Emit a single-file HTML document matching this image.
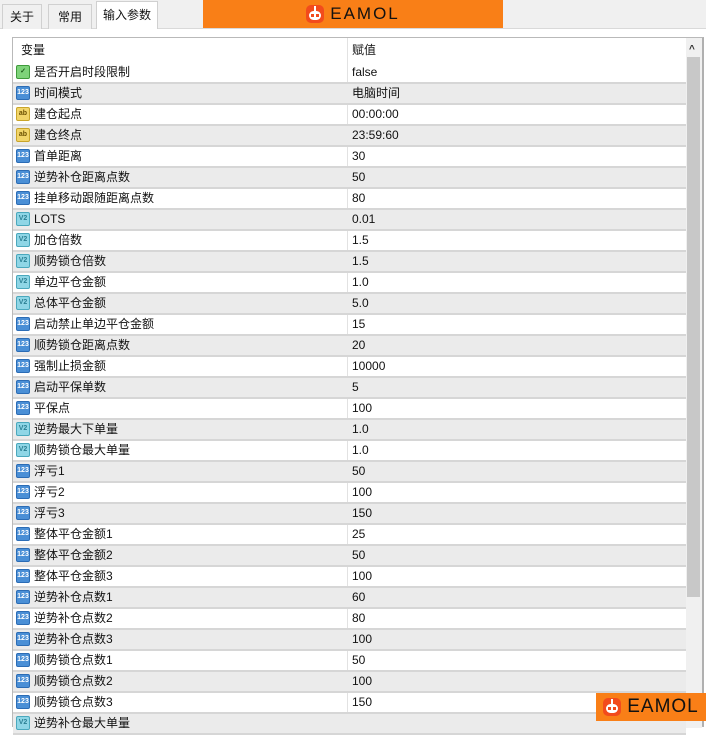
<!DOCTYPE html><html><head><meta charset="utf-8"><style>
*{margin:0;padding:0;box-sizing:border-box}
body{width:706px;height:721px;background:#fff;position:relative;overflow:hidden;font-family:"Liberation Sans","Noto Sans CJK SC",sans-serif;font-size:12px;color:#111;line-height:15px}
.topbar{position:absolute;left:0;top:0;width:706px;height:29px;background:#f0f0f0;border-bottom:1px solid #d9d9d9}
.tab{position:absolute;top:4px;height:25px;border:1px solid #d0d0d0;border-bottom:none;background:#f0f0f0;padding:5px 0 0 0;text-align:center;font-size:12px}
.tab.act{top:1px;height:28px;background:#fff;padding-top:6px}
.banner{position:absolute;left:203px;top:0;width:300px;height:28px;background:#f97f17;display:flex;align-items:center;justify-content:center}
.logo{display:flex;align-items:center;gap:6px}
.ico{width:18px;height:18px;background:#f24b1c;border-radius:5px;position:relative}
.ico:before{content:"";position:absolute;left:3px;top:6px;width:12px;height:9px;background:#fff;border-radius:5px}
.ico:after{content:"";position:absolute;left:8px;top:1px;width:2px;height:5px;background:#fff}
.eyes{position:absolute;left:5px;top:9px;width:8px;height:3px;border-left:3px solid #f24b1c;border-right:3px solid #f24b1c;z-index:2}
.word{font-size:17px;letter-spacing:2px;color:#111;line-height:20px}
.frame{position:absolute;left:12px;top:37px;width:692px;height:690px;border:1px solid #b9b9b9;border-right:2px solid #b0b0b0}
.hdr{position:absolute;left:13px;top:38px;width:673px;height:24px;background:#fff}
.hdr span{position:absolute;top:5px}
.vline{position:absolute;left:347px;top:38px;width:1px;height:690px;background:#e2e2e2}
.row{position:absolute;left:13px;width:673px;height:21px;border-bottom:2px solid #d6d6d6}
.row.g{background:#ebebeb}
.row .n{position:absolute;left:21px;top:2px;line-height:15px}
.row .v{position:absolute;left:339px;top:2px;line-height:15px}
.ic{position:absolute;left:3px;top:2px;width:14px;height:14px;border-radius:2px;font-size:7px;font-weight:bold;line-height:12px;text-align:center;color:#fff;font-family:"Liberation Sans",sans-serif}
.b{background:#4a8fd6;border:1px solid #2b6cb5}
.gr{background:#7ed37a;border:1px solid #3f9b3b;color:#1d5b1a}
.y{background:#f2d56a;border:1px solid #c9a52a;color:#6b5000}
.t{background:#8fd6e6;border:1px solid #4aa8bd;color:#2b7f93}
.sb{position:absolute;left:686px;top:38px;width:16px;height:690px;background:#f0f0f0}
.thumb{position:absolute;left:687px;top:57px;width:13px;height:540px;background:#c8c8c8}
.arr{position:absolute;left:689px;top:42px;font-size:10px;font-weight:bold;color:#333}
.blogo{position:absolute;left:596px;top:693px;width:110px;height:28px;background:#f97f17;display:flex;align-items:center;justify-content:center}
.blogo .word{font-size:19px;letter-spacing:1px}
</style></head><body>
<div class="topbar"></div>
<div class="tab" style="left:2px;width:40px">关于</div>
<div class="tab" style="left:48px;width:44px">常用</div>
<div class="tab act" style="left:96px;width:62px">输入参数</div>
<div class="banner"><div class="logo"><div class="ico"><div class="eyes"></div></div><span class="word">EAMOL</span></div></div>
<div class="frame"></div>
<div class="hdr"><span style="left:8px">变量</span><span style="left:339px">赋值</span></div>
<div class="vline"></div>
<div id="rows"></div>
<div class="sb"></div><div class="thumb"></div><div class="arr">^</div>
<div class="blogo"><div class="logo"><div class="ico"><div class="eyes"></div></div><span class="word">EAMOL</span></div></div>
<script>
var d=[["gr","是否开启时段限制","false"],["b","时间模式","电脑时间"],["y","建仓起点","00:00:00"],["y","建仓终点","23:59:60"],["b","首单距离","30"],["b","逆势补仓距离点数","50"],["b","挂单移动跟随距离点数","80"],["t","LOTS","0.01"],["t","加仓倍数","1.5"],["t","顺势锁仓倍数","1.5"],["t","单边平仓金额","1.0"],["t","总体平仓金额","5.0"],["b","启动禁止单边平仓金额","15"],["b","顺势锁仓距离点数","20"],["b","强制止损金额","10000"],["b","启动平保单数","5"],["b","平保点","100"],["t","逆势最大下单量","1.0"],["t","顺势锁仓最大单量","1.0"],["b","浮亏1","50"],["b","浮亏2","100"],["b","浮亏3","150"],["b","整体平仓金额1","25"],["b","整体平仓金额2","50"],["b","整体平仓金额3","100"],["b","逆势补仓点数1","60"],["b","逆势补仓点数2","80"],["b","逆势补仓点数3","100"],["b","顺势锁仓点数1","50"],["b","顺势锁仓点数2","100"],["b","顺势锁仓点数3","150"],["t","逆势补仓最大单量",""]];
var lab={b:"123",gr:"✓",y:"ab",t:"V2"},h="";
d.forEach(function(r,i){h+='<div class="row'+(i%2?' g':'')+'" style="top:'+(63+21*i)+'px"><div class="ic '+r[0]+'">'+lab[r[0]]+'</div><span class="n">'+r[1]+'</span><span class="v">'+r[2]+'</span></div>';});
document.getElementById("rows").innerHTML=h;
</script>
</body></html>
